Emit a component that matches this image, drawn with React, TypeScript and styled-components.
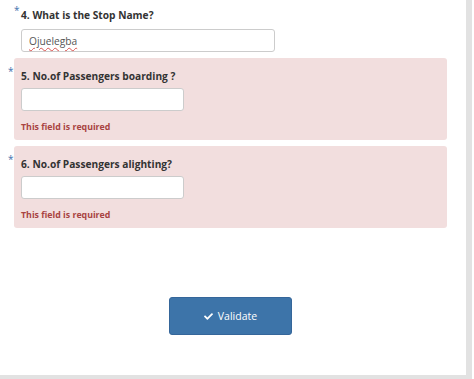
import React from "react";
import styled, { createGlobalStyle } from "styled-components";
import { FaCheck } from "react-icons/fa";

const GlobalStyle = createGlobalStyle`
  html, body {
    margin: 0;
    padding: 0;
    background: #ffffff;
  }
  body {
    font-family: "Open Sans", "Liberation Sans", sans-serif;
    color: #333333;
  }
  * {
    box-sizing: border-box;
  }
`;

const Frame = styled.div`
  width: 472px;
  height: 379px;
  border-right: 6px solid #e2e2e2;
  border-bottom: 4px solid #e2e2e2;
  padding: 7px 19px 0 14px;
`;

const Plain = styled.div`
  padding: 0 7px 6px;
`;

const Panel = styled.div`
  background: #f2dede;
  border-radius: 3px;
  padding: 10px 7px 6px;
  margin-bottom: 6px;
`;

const Label = styled.div<{ $gap: number }>`
  position: relative;
  font-size: 10.2px;
  line-height: 16px;
  font-weight: 700;
  color: #333333;
  margin-bottom: ${(p) => p.$gap}px;
`;

const Star = styled.span<{ $offset: number }>`
  position: absolute;
  left: -${(p) => p.$offset}px;
  top: -5px;
  font-size: 10px;
  font-weight: 400;
  color: #3f72ad;
`;

const Field = styled.div<{ $width: number }>`
  width: ${(p) => p.$width}px;
  height: 23px;
  background: #ffffff;
  border: 1px solid #cccccc;
  border-radius: 3px;
  padding: 0 7px;
  display: flex;
  align-items: center;
  font-size: 10.2px;
  color: #555555;
`;

const Misspelt = styled.span`
  text-decoration: underline wavy #d9534f;
  text-decoration-thickness: 1px;
  text-underline-offset: 2px;
`;

const ErrorText = styled.div`
  margin-top: 9px;
  font-size: 8.8px;
  line-height: 14px;
  font-weight: 700;
  color: #a94442;
`;

const Actions = styled.div`
  display: flex;
  justify-content: center;
  padding-top: 63px;
`;

const Button = styled.button`
  width: 123px;
  height: 38px;
  display: flex;
  align-items: center;
  justify-content: center;
  gap: 5px;
  background: #3d74a9;
  border: 1px solid #35669a;
  border-radius: 3px;
  color: #ffffff;
  font-family: "Open Sans", "Liberation Sans", sans-serif;
  font-size: 10.5px;
  cursor: pointer;
  svg {
    width: 9px;
    height: 9px;
  }
`;

const questions = [
  { n: 5, text: "No.of Passengers boarding ?" },
  { n: 6, text: "No.of Passengers alighting?" },
];

export default function App() {
  return (
    <>
      <GlobalStyle />
      <Frame>
        <Plain>
          <Label $gap={6}>
            <Star $offset={7}>*</Star>4. What is the Stop Name?
          </Label>
          <Field $width={254} role="textbox">
            <Misspelt>Ojuelegba</Misspelt>
          </Field>
        </Plain>
        {questions.map((q) => (
          <Panel key={q.n}>
            <Label $gap={4}>
              <Star $offset={13}>*</Star>
              {q.n}. {q.text}
            </Label>
            <Field $width={163} role="textbox" />
            <ErrorText>This field is required</ErrorText>
          </Panel>
        ))}
        <Actions>
          <Button type="button">
            <FaCheck />
            Validate
          </Button>
        </Actions>
      </Frame>
    </>
  );
}
